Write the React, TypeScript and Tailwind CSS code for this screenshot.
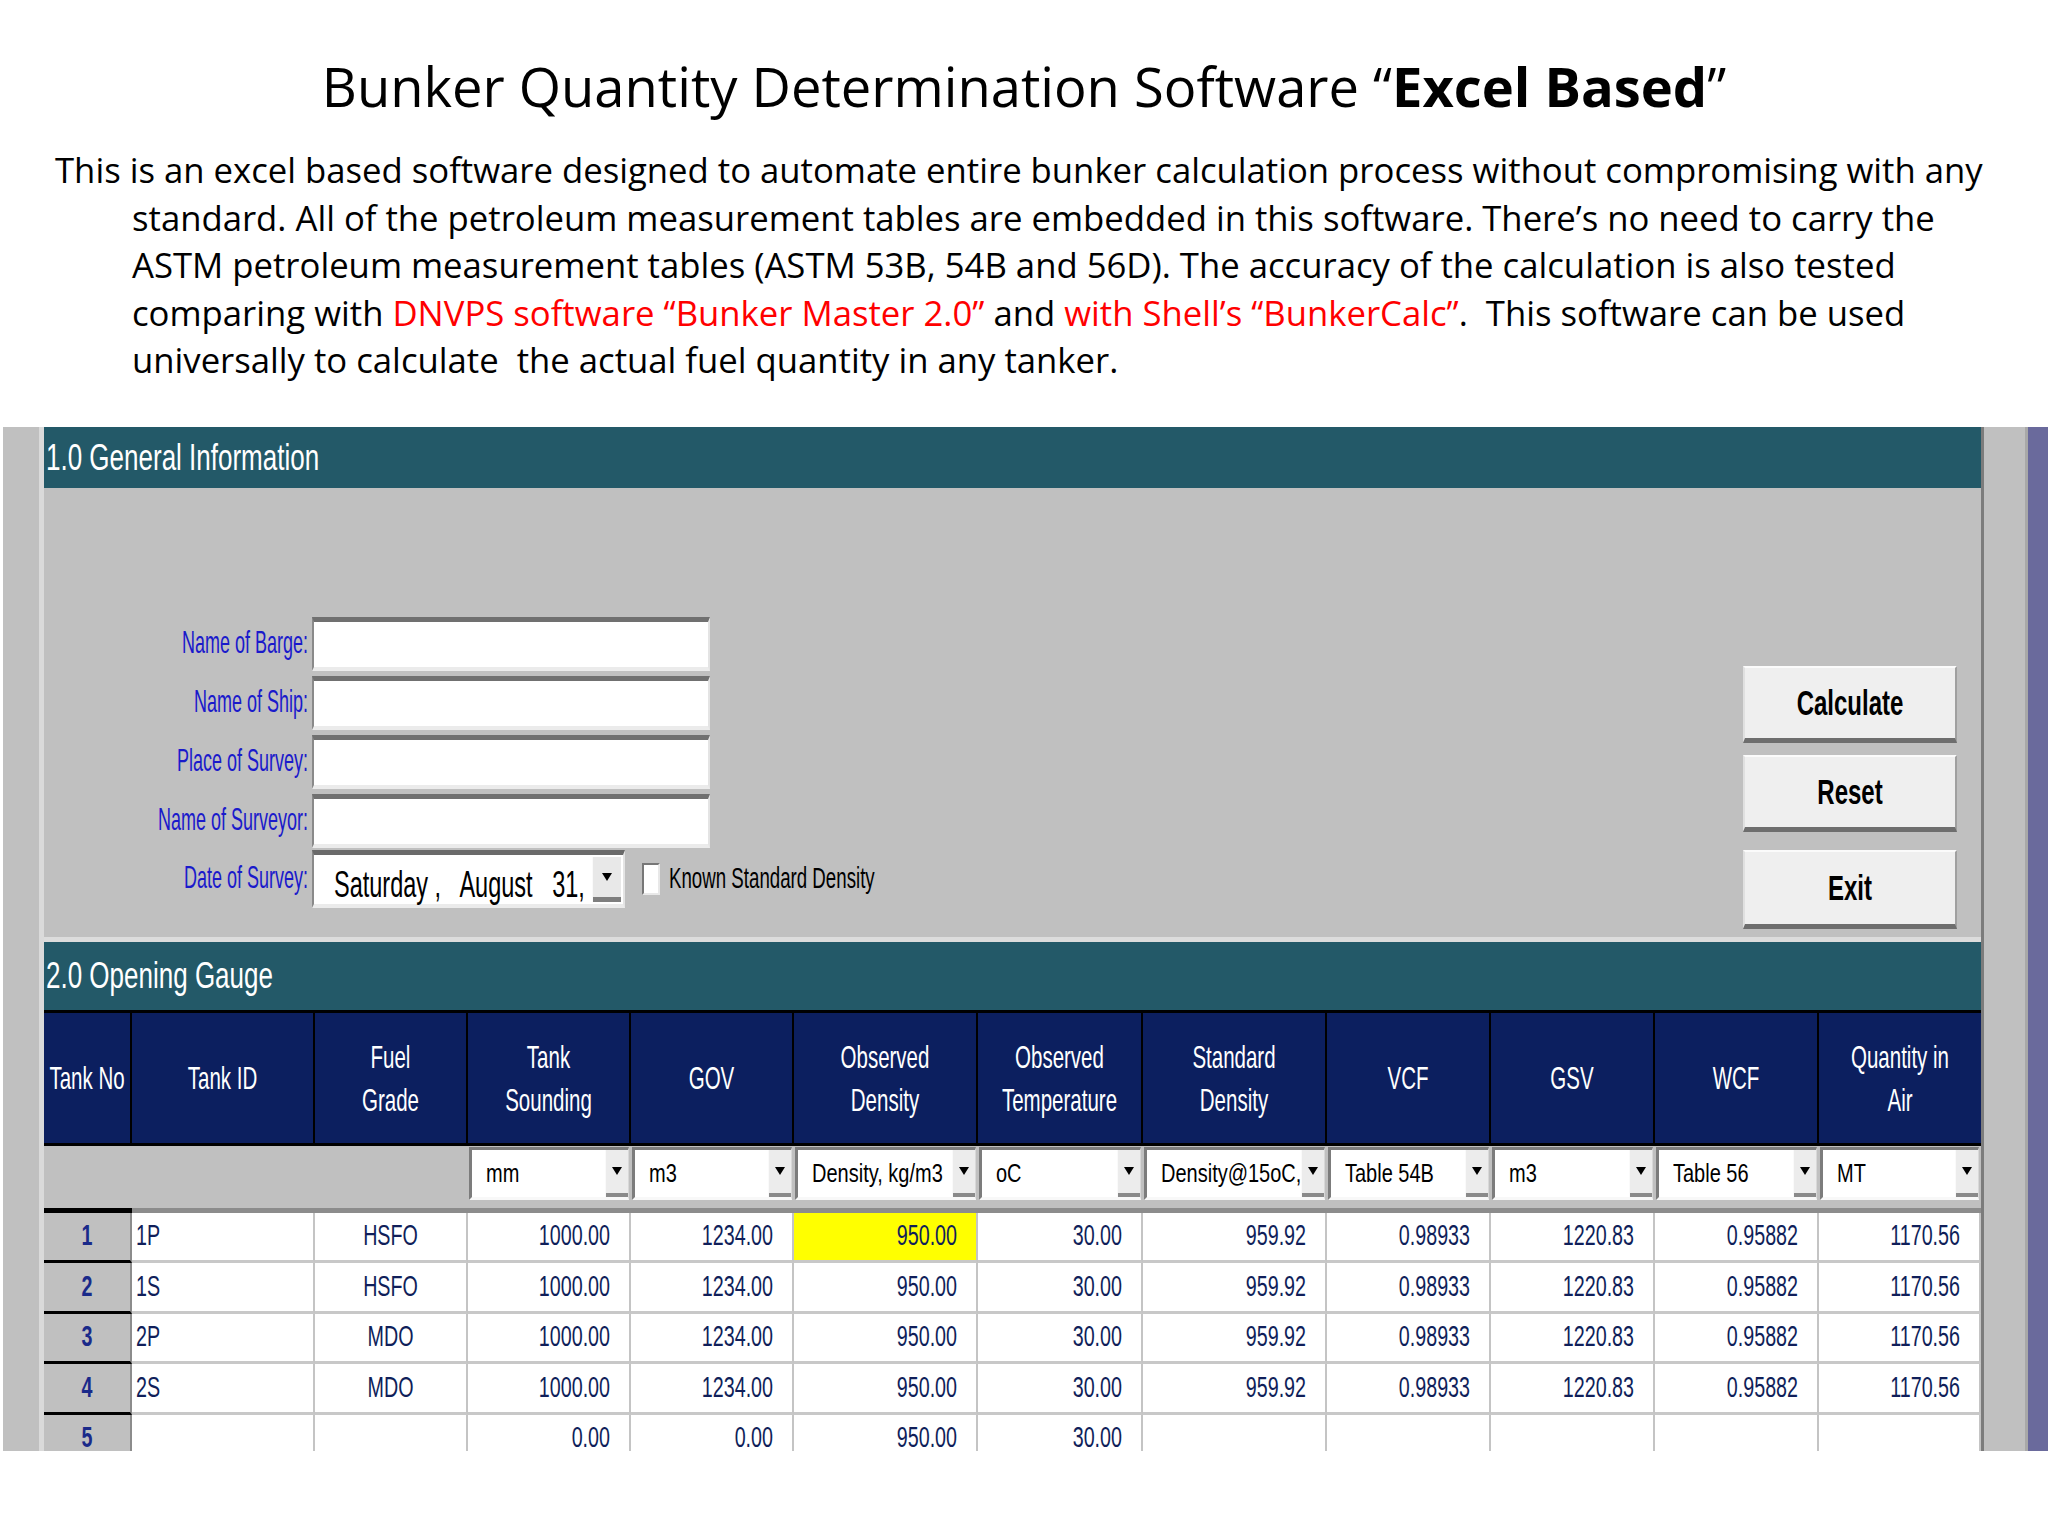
import React from 'react'

const arial = "font-['Liberation_Sans',Arial,sans-serif]"

const cols = 'grid grid-cols-[88px_183px_153px_163px_163px_184px_165px_184px_164px_164px_164px_162px]'

type Row = {
  no: number
  id: string
  grade: string
  vals: string[]
}

const full = ['1000.00', '1234.00', '950.00', '30.00', '959.92', '0.98933', '1220.83', '0.95882', '1170.56']

const rows: Row[] = [
  { no: 1, id: '1P', grade: 'HSFO', vals: full },
  { no: 2, id: '1S', grade: 'HSFO', vals: full },
  { no: 3, id: '2P', grade: 'MDO', vals: full },
  { no: 4, id: '2S', grade: 'MDO', vals: full },
  { no: 5, id: '', grade: '', vals: ['0.00', '0.00', '950.00', '30.00', '', '', '', '', ''] },
]

const headers: string[][] = [
  ['Tank No'],
  ['Tank ID'],
  ['Fuel', 'Grade'],
  ['Tank', 'Sounding'],
  ['GOV'],
  ['Observed', 'Density'],
  ['Observed', 'Temperature'],
  ['Standard', 'Density'],
  ['VCF'],
  ['GSV'],
  ['WCF'],
  ['Quantity in', 'Air'],
]

const units = ['mm', 'm3', 'Density, kg/m3', 'oC', 'Density@15oC,kg/m3', 'Table 54B', 'm3', 'Table 56', 'MT']

function Arrow() {
  return (
    <svg width="10" height="8" viewBox="0 0 10 8">
      <path d="M0 0h10L5 8z" fill="#000" />
    </svg>
  )
}

// combo box as drawn by the old VBA form
function UnitSelect({ label }: { label: string }) {
  return (
    <div className="flex h-[53px] bg-white border-t-[3px] border-l-[3px] border-t-[#7c7c7c] border-l-[#7c7c7c] border-r border-r-[#d8d8d8] border-b-[3px] border-b-[#f8f8f8]">
      <div className={`flex-1 overflow-hidden whitespace-nowrap pl-[14px] flex items-center text-[20px] text-black ${arial}`}>
        <span className="inline-block scale-y-[1.28]">{label}</span>
      </div>
      <div className="w-[23px] shrink-0 flex flex-col bg-[#ececec] border-l border-l-[#fafafa]">
        <div className="flex-1 flex items-center justify-center">
          <Arrow />
        </div>
        <div className="h-[4px] bg-[#8a8a8a]" />
      </div>
    </div>
  )
}

function Label({ text }: { text: string }) {
  return (
    <div className={`w-[268px] pr-[4px] text-right text-[18px] text-[#1a1acb] ${arial}`}>
      <span className="inline-block scale-y-[1.72]">{text}</span>
    </div>
  )
}

function Field() {
  return (
    <div className="w-[398px] h-[54px] bg-white border-t-[5px] border-t-[#707070] border-l-[2px] border-l-[#8a8a8a] border-r-[2px] border-r-[#e4e4e4] border-b-[4px] border-b-[#ebebeb]" />
  )
}

function Btn({ text, h }: { text: string; h: string }) {
  return (
    <button className={`w-[214px] ${h} bg-[#efefef] border-t-2 border-t-[#fbfbfb] border-l-2 border-l-[#e0e0e0] border-r-2 border-r-[#a0a0a0] border-b-[5px] border-b-[#6e6e6e] flex items-center justify-center`}>
      <span className={`inline-block scale-y-[1.44] text-[24px] font-bold text-black ${arial}`}>{text}</span>
    </button>
  )
}

export default function App() {
  return (
    <div className="w-[2048px] h-[1536px] bg-white overflow-hidden font-['Open_Sans',sans-serif] text-black">
      {/* Title */}
      <div className="pt-[53px] text-center text-[54.3px] leading-[66px] whitespace-nowrap">
        Bunker Quantity Determination Software “<b>Excel Based</b>”
      </div>

      {/* Intro */}
      <div className="mt-[27px] text-[34.7px] leading-[47.5px] whitespace-pre">
        <div className="pl-[55px]">This is an excel based software designed to automate entire bunker calculation process without compromising with any</div>
        <div className="pl-[132px]">standard. All of the petroleum measurement tables are embedded in this software. There’s no need to carry the</div>
        <div className="pl-[132px]">ASTM petroleum measurement tables (ASTM 53B, 54B and 56D). The accuracy of the calculation is also tested</div>
        <div className="pl-[132px]">
          comparing with <span className="text-[#ff0000]">DNVPS software “Bunker Master 2.0”</span> and{' '}
          <span className="text-[#ff0000]">with Shell’s “BunkerCalc”</span>.  This software can be used
        </div>
        <div className="pl-[132px]">universally to calculate  the actual fuel quantity in any tanker.</div>
      </div>

      {/* Sheet screenshot */}
      <div className="ml-[3px] mt-[43px] h-[1024px] flex overflow-hidden bg-[#c0c0c0]">
        <div className="w-[36px] shrink-0 bg-[#c0c0c0]" />
        <div className="w-[5px] shrink-0 bg-[#dadada]" />

        <div className="w-[1937px] shrink-0 flex flex-col">
          {/* 1.0 */}
          <div className="h-[61px] shrink-0 bg-[#235968] flex items-center pl-[2px]">
            <span className={`inline-block scale-y-[1.43] text-[26px] text-white ${arial}`}>1.0 General Information</span>
          </div>

          <div className="h-[449px] shrink-0 bg-[#c0c0c0] flex justify-between">
            <div className="pt-[129px] flex flex-col gap-[5px]">
              {['Name of Barge:', 'Name of Ship:', 'Place of Survey:', 'Name of Surveyor:'].map((l) => (
                <div key={l} className="flex items-center">
                  <Label text={l} />
                  <Field />
                </div>
              ))}
              <div className="flex items-center -mt-[3px]">
                <Label text="Date of Survey:" />
                <div className="w-[313px] h-[58px] bg-white border-t-[5px] border-t-[#6a6a6a] border-l-[2px] border-l-[#8a8a8a] border-r-[2px] border-r-[#e4e4e4] border-b-[4px] border-b-[#ebebeb] flex items-center">
                  <div className={`flex-1 pl-[20px] pt-[13px] text-[23.5px] whitespace-pre ${arial}`}>
                    <span className="inline-block scale-y-[1.6]">Saturday ,   August   31,</span>
                  </div>
                  <div className="w-[29px] h-[45px] mr-[2px] flex flex-col bg-[#e8e8e8] border-l border-l-[#fafafa]">
                    <div className="flex-1 flex items-center justify-center">
                      <Arrow />
                    </div>
                    <div className="h-[5px] bg-[#7e7e7e]" />
                  </div>
                </div>
                <div className="ml-[17px] w-[18px] h-[32px] bg-white border-t-2 border-l-2 border-t-[#777777] border-l-[#777777] border-b-2 border-r-2 border-b-[#e8e8e8] border-r-[#e8e8e8]" />
                <div className={`ml-[9px] text-[18.7px] ${arial}`}>
                  <span className="inline-block scale-y-[1.62]">Known Standard Density</span>
                </div>
              </div>
            </div>

            <div className="pt-[178px] pr-[24px] flex flex-col">
              <Btn text="Calculate" h="h-[77px]" />
              <div className="mt-[12px]">
                <Btn text="Reset" h="h-[77px]" />
              </div>
              <div className="mt-[18px]">
                <Btn text="Exit" h="h-[79px]" />
              </div>
            </div>
          </div>

          <div className="h-[5px] shrink-0 bg-[#dcdcdc]" />

          {/* 2.0 */}
          <div className="h-[68px] shrink-0 bg-[#235968] flex items-center pl-[2px]">
            <span className={`inline-block scale-y-[1.43] text-[26px] text-white ${arial}`}>2.0 Opening Gauge</span>
          </div>

          {/* Header */}
          <div className={`${cols} h-[136px] shrink-0 bg-[#0c1f5f] border-y-[3px] border-black`}>
            {headers.map((h, i) => (
              <div
                key={i}
                className={`flex flex-col items-center justify-center text-center text-white text-[20.5px] leading-[43px] ${arial} ${i < 11 ? 'border-r-2 border-r-black' : ''}`}
              >
                {h.map((t) => (
                  <span key={t} className="block scale-y-[1.55] whitespace-nowrap">
                    {t}
                  </span>
                ))}
              </div>
            ))}
          </div>

          {/* Units */}
          <div className={`${cols} h-[62px] shrink-0 bg-[#c0c0c0]`}>
            <div />
            <div />
            <div />
            {units.map((u, i) => (
              <div key={i} className="pt-[1px] pl-[1px] pr-[2px]">
                <UnitSelect label={u} />
              </div>
            ))}
          </div>
          <div className="flex h-[5px] shrink-0">
            <div className="w-[88px] bg-black" />
            <div className="flex-1 bg-[#8c8c8c]" />
          </div>

          {/* Rows */}
          {rows.map((r) => (
            <div key={r.no} className={`${cols} h-[50.5px] shrink-0 text-[19.7px] text-[#101f5a] ${arial}`}>
              <div className="bg-[#c0c0c0] border-b-[3px] border-b-black border-r-2 border-r-[#8c8c8c] flex items-center justify-center font-bold text-[#1a2a8a]">
                <span className="inline-block scale-y-[1.54]">{r.no}</span>
              </div>
              <div className="bg-white border-b-[3px] border-b-[#c8c8c8] border-r-2 border-r-[#c4c4c4] flex items-center pl-[4px]">
                <span className="inline-block scale-y-[1.54]">{r.id}</span>
              </div>
              <div className="bg-white border-b-[3px] border-b-[#c8c8c8] border-r-2 border-r-[#c4c4c4] flex items-center justify-center">
                <span className="inline-block scale-y-[1.54]">{r.grade}</span>
              </div>
              {r.vals.map((v, i) => (
                <div
                  key={i}
                  className={`border-b-[3px] border-b-[#c8c8c8] border-r-2 border-r-[#c4c4c4] flex items-center justify-end pr-[19px] ${r.no === 1 && i === 2 ? 'bg-[#ffff00]' : 'bg-white'}`}
                >
                  <span className="inline-block scale-y-[1.54]">{v}</span>
                </div>
              ))}
            </div>
          ))}
        </div>

        <div className="w-[47px] shrink-0 bg-[#c0c0c0] border-l-[3px] border-l-[#7c7c7c] border-r-[3px] border-r-[#a8a8a8]" />
        <div className="w-[20px] shrink-0 bg-[#6a6a9c]" />
      </div>
    </div>
  )
}
